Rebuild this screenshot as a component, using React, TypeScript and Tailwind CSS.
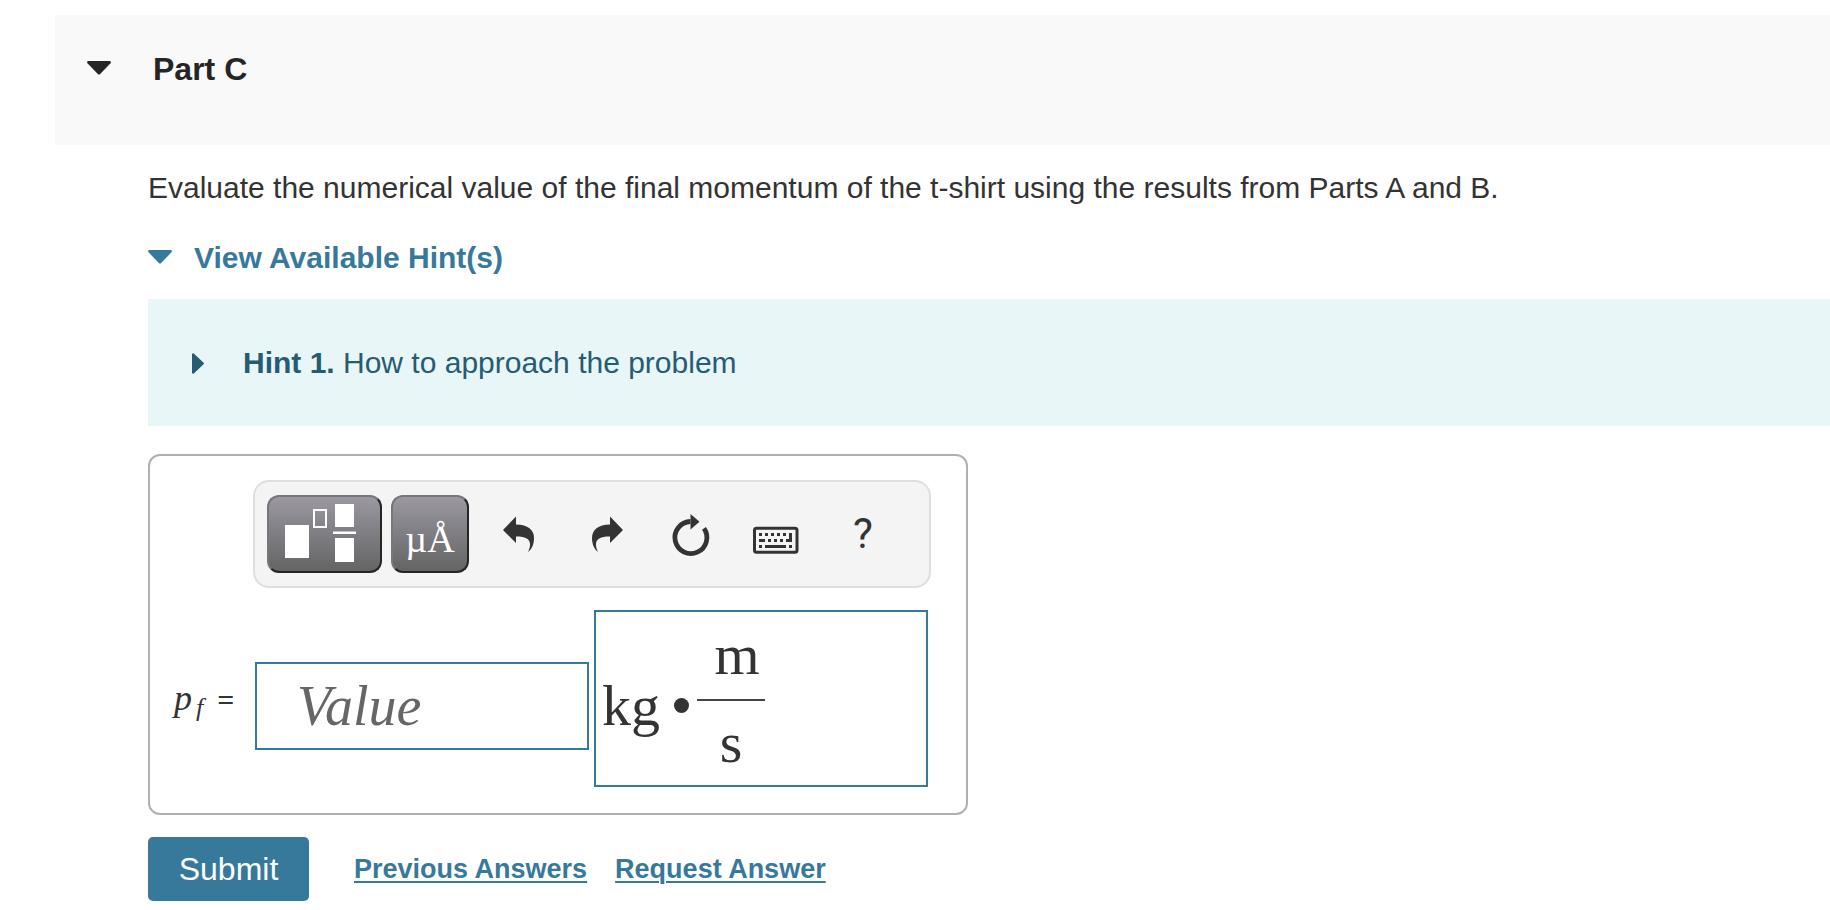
import React from "react";

const KEYS = [
  [6, 23, 3], [12, 23, 3], [18, 23, 3], [24, 23, 3], [30, 23, 3], [36, 23, 3],
  [6, 29, 6], [15, 29, 3], [21, 29, 3], [27, 29, 3], [33, 29, 6],
  [6, 35, 3], [12, 35, 21], [36, 35, 3],
];

const CaretDown = () => (
  <svg className="w-6 h-4 fill-current" viewBox="0 0 24 16" aria-hidden="true">
    <path d="M1 0H23Q24.5 1 23.5 2.2L13.2 13Q12 14.2 10.8 13L.5 2.2Q-.5 1 1 0Z" />
  </svg>
);

const CaretRight = () => (
  <svg className="w-3 h-[21px] fill-current" viewBox="0 0 12 21" aria-hidden="true">
    <path d="M0 1Q.8-.3 1.8.6L11.6 9.7Q12.4 10.5 11.6 11.3L1.8 20.4Q.8 21.3 0 20Z" />
  </svg>
);

const Toolbar = () => (
  <div
    role="toolbar"
    aria-label="Equation tools"
    className="flex items-center w-[678px] pl-3 py-[13px] rounded-2xl border-2 border-[#dedede] bg-[#f4f4f4]"
  >
    <button
      type="button"
      aria-label="Templates"
      className="w-[115px] h-[78px] mr-[9px] rounded-xl border-2 border-t-[#77767a] border-l-[#77767a] border-r-[#252525] border-b-[#252525] bg-linear-to-b from-[#9b98a2] to-[#646464]"
    >
      <svg className="w-full h-full" viewBox="2 2 111 74" aria-hidden="true">
        <g fill="#fff">
          <rect x="18" y="30" width="24" height="33" />
          <rect x="68" y="9" width="19" height="23" />
          <rect x="66" y="36.5" width="23" height="2.5" />
          <rect x="68" y="43" width="19" height="24" />
        </g>
        <rect x="47" y="15" width="12" height="17" fill="none" stroke="#fff" strokeWidth="2" />
      </svg>
    </button>
    <button
      type="button"
      aria-label="Units"
      className="w-[78px] h-[78px] mr-[7px] pt-2.5 rounded-xl border-2 border-t-[#77767a] border-l-[#77767a] border-r-[#252525] border-b-[#252525] bg-linear-to-b from-[#9b98a2] to-[#646464] font-['Liberation_Serif',serif] text-[38px] leading-none text-white"
    >
      µÅ
    </button>
    <button type="button" aria-label="Undo" className="flex justify-center w-[86px]">
      <svg className="w-12 h-12 fill-current" viewBox="0 0 48 48" aria-hidden="true">
        <path d="M8 20 21 6.5V14.5C33 14.5 39 20 39 28 39 34 37 39 33 42 36 36 35.5 31 32.5 29 29.5 27 26 26.5 21 26.5V33Z" />
      </svg>
    </button>
    <button type="button" aria-label="Redo" className="flex justify-center w-[86px]">
      <svg className="w-12 h-12 fill-current" viewBox="0 0 48 48" aria-hidden="true">
        <path d="M42 20 29 6.5V14.5C17 14.5 11 20 11 28 11 34 13 39 17 42 14 36 14.5 31 17.5 29 20.5 27 24 26.5 29 26.5V33Z" />
      </svg>
    </button>
    <button type="button" aria-label="Reset" className="flex justify-center w-[86px]">
      <svg className="w-12 h-12" viewBox="0 0 48 48" aria-hidden="true">
        <path d="M23.5 11.5A16 16 0 1 0 37 18.3" fill="none" stroke="currentColor" strokeWidth="4.8" />
        <path d="M23.5 4 32.5 11.7 23.5 19.5Z" fill="currentColor" />
      </svg>
    </button>
    <button type="button" aria-label="Keyboard shortcuts" className="flex justify-center w-[86px]">
      <svg className="w-12 h-12 fill-current" viewBox="0 0 48 48" aria-hidden="true">
        <rect x="1.5" y="18.2" width="42.5" height="24" rx="2" fill="none" stroke="currentColor" strokeWidth="3" />
        {KEYS.map(([x, y, w]) => (
          <rect key={`${x}-${y}`} x={x} y={y} width={w} height="3" />
        ))}
        <rect x="36" y="23" width="3" height="9" />
      </svg>
    </button>
    <button type="button" aria-label="Help" className="w-[86px] font-[Roboto,sans-serif] text-[42px] leading-none">
      ?
    </button>
  </div>
);

const AnswerBox = () => (
  <div className="grid grid-cols-[103px_auto] gap-y-[22px] w-fit pt-6 pb-[26px] pr-[35px] rounded-xl border-2 border-[#b0b0b0]">
    <div className="col-start-2">
      <Toolbar />
    </div>
    <label
      htmlFor="value"
      className="self-center pl-6 font-['Liberation_Serif',serif] text-[36px] leading-9 whitespace-nowrap"
    >
      <i>p</i>
      <sub className="pl-1 text-[26px] italic">f</sub>
      <span className="pl-3.5 text-[30px] font-bold">=</span>
    </label>
    <div className="flex items-center gap-[5px] pl-0.5">
      <div className="pt-3.5">
        <input
          id="value"
          type="text"
          placeholder="Value"
          className="block w-[334px] h-[88px] px-10 border-2 border-[#37799b] bg-white font-['Liberation_Serif',serif] text-[56px] italic placeholder:text-[#666]"
        />
      </div>
      <div
        role="textbox"
        tabIndex={0}
        aria-label="Units"
        className="flex items-center w-[334px] h-[177px] pl-1.5 border-2 border-[#37799b] bg-white font-['Liberation_Serif',serif] text-[58px] leading-[64px]"
      >
        <span className="pt-3.5">kg</span>
        <span className="w-[15px] h-[15px] ml-[14px] mt-3.5 mr-2 rounded-full bg-[#333]" />
        <span className="flex flex-col w-[68px]">
          <span className="pb-3 pl-3 border-b-2 border-[#444] text-center">m</span>
          <span className="pt-2.5 text-center">s</span>
        </span>
      </div>
    </div>
  </div>
);

const App = () => {
  return (
    <main className="min-h-screen pt-[15px] bg-white font-['Liberation_Sans',Arial,sans-serif] text-[30px] leading-9 text-[#333]">
      <header className="h-[130px] ml-[55px] pl-8 pt-9 bg-[#f9f9f9] text-[#252525]">
        <h2 className="text-[32px] font-bold">
          <button type="button" aria-expanded="true" className="flex items-center gap-[42px]">
            <CaretDown />
            Part C
          </button>
        </h2>
      </header>

      <div className="pl-[148px] pt-[25px]">
        <p>
          Evaluate the numerical value of the final momentum of the t-shirt using the results from Parts A and B.
        </p>

        <button
          type="button"
          aria-expanded="true"
          className="flex items-center gap-[22px] mt-[34px] font-bold text-[#37799b]"
        >
          <CaretDown />
          View Available Hint(s)
        </button>

        <div className="mt-[23px] pl-11 pt-[46px] pb-[45px] bg-[#e8f6f7] text-[#255c73]">
          <button type="button" aria-expanded="false" className="flex items-center gap-[39px]">
            <CaretRight />
            <span>
              <b>Hint 1.</b> How to approach the problem
            </span>
          </button>
        </div>

        <div className="pt-7">
          <AnswerBox />
        </div>

        <div className="flex items-center pt-[22px] text-[27px] font-bold text-[#37799b]">
          <button
            type="button"
            className="w-[161px] h-16 mr-[45px] rounded-[5px] bg-[#37799b] text-[32px] font-normal text-white"
          >
            Submit
          </button>
          <a href="#" className="mr-7 underline decoration-2 underline-offset-[3px]">
            Previous Answers
          </a>
          <a href="#" className="underline decoration-2 underline-offset-[3px]">
            Request Answer
          </a>
        </div>
      </div>
    </main>
  );
};

export default App;
